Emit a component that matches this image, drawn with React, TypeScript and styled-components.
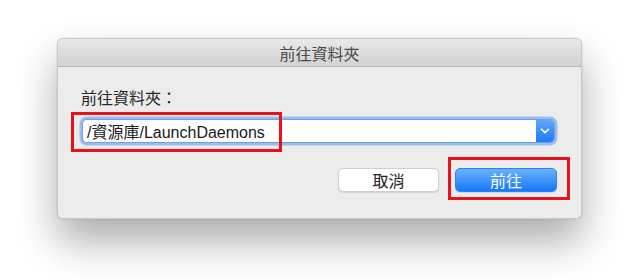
import React from "react";
import styled, { createGlobalStyle } from "styled-components";

const GlobalStyle = createGlobalStyle`
  html, body {
    margin: 0;
    padding: 0;
    background: #ffffff;
  }
  body {
    font-family: "Liberation Sans", "Noto Sans CJK TC", sans-serif;
  }
`;

const Page = styled.div`
  width: 642px;
  height: 280px;
  padding: 38px 0 0 57px;
  box-sizing: border-box;
  overflow: hidden;
`;

const Window = styled.div`
  position: relative;
  width: 525px;
  height: 181px;
  box-sizing: border-box;
  background: #ececec;
  border-radius: 6px;
  border: 1px solid #c9c9c9;
  box-shadow: 0 22px 40px rgba(0, 0, 0, 0.33), 0 0 2px rgba(0, 0, 0, 0.15);
  display: flex;
  flex-direction: column;
`;

const TitleBar = styled.div`
  height: 27px;
  border-bottom: 1px solid #b9b9b9;
  border-radius: 6px 6px 0 0;
  background: linear-gradient(#e9e9e9, #d2d2d2);
  display: flex;
  align-items: center;
  justify-content: center;
  font-size: 16px;
  color: #4a4a4a;
`;

const Body = styled.div`
  padding: 23px 24px 0 23px;
  display: flex;
  flex-direction: column;
`;

const Label = styled.div`
  font-size: 16px;
  line-height: 18px;
  color: #262626;
`;

const Combo = styled.div`
  margin: 12px 3px 0 2px;
  height: 22px;
  display: flex;
  background: #fff;
  border-radius: 4px;
  box-shadow: 0 0 0 1px #6ea2e8, 0 0 0 3.5px rgba(90, 150, 240, 0.55);
`;

const Field = styled.div`
  flex: 1;
  display: flex;
  align-items: center;
  padding-left: 4px;
  font-size: 16px;
  color: #1a1a1a;
`;

const DropButton = styled.div`
  width: 18px;
  border-radius: 0 4px 4px 0;
  background: linear-gradient(#5ea6fb, #1d7cf6);
  display: flex;
  align-items: center;
  justify-content: center;
`;

const Buttons = styled.div`
  margin-top: 26px;
  display: flex;
  justify-content: flex-end;
  gap: 16px;
`;

const Button = styled.div<{ $primary?: boolean }>`
  width: ${(p) => (p.$primary ? 102 : 101)}px;
  height: 24px;
  box-sizing: border-box;
  border-radius: 5px;
  display: flex;
  align-items: center;
  justify-content: center;
  font-size: 16px;
  color: ${(p) => (p.$primary ? "#ffffff" : "#222222")};
  background: ${(p) =>
    p.$primary ? "linear-gradient(#6bb1fb, #1579f6)" : "#ffffff"};
  border: 1px solid ${(p) => (p.$primary ? "#2f83f0" : "#cfcfcf")};
  box-shadow: 0 1px 1px rgba(0, 0, 0, 0.12);
`;

const Highlight = styled.div<{ $l: number; $t: number; $w: number; $h: number }>`
  position: absolute;
  left: ${(p) => p.$l}px;
  top: ${(p) => p.$t}px;
  width: ${(p) => p.$w}px;
  height: ${(p) => p.$h}px;
  box-sizing: border-box;
  border: 3px solid #e8121d;
  pointer-events: none;
`;

const App = () => {
  return (
    <Page>
      <GlobalStyle />
      <Window>
        <TitleBar>前往資料夾</TitleBar>
        <Body>
          <Label>前往資料夾：</Label>
          <Combo>
            <Field>/資源庫/LaunchDaemons</Field>
            <DropButton>
              <svg width="10" height="6" viewBox="0 0 10 6">
                <path
                  d="M1.5 1.2 L5 4.6 L8.5 1.2"
                  fill="none"
                  stroke="#fff"
                  strokeWidth="1.6"
                  strokeLinecap="round"
                  strokeLinejoin="round"
                />
              </svg>
            </DropButton>
          </Combo>
          <Buttons>
            <Button>取消</Button>
            <Button $primary>前往</Button>
          </Buttons>
        </Body>
        <Highlight $l={13} $t={73} $w={211} $h={40} />
        <Highlight $l={390} $t={118} $w={122} $h={43} />
      </Window>
    </Page>
  );
};

export default App;
